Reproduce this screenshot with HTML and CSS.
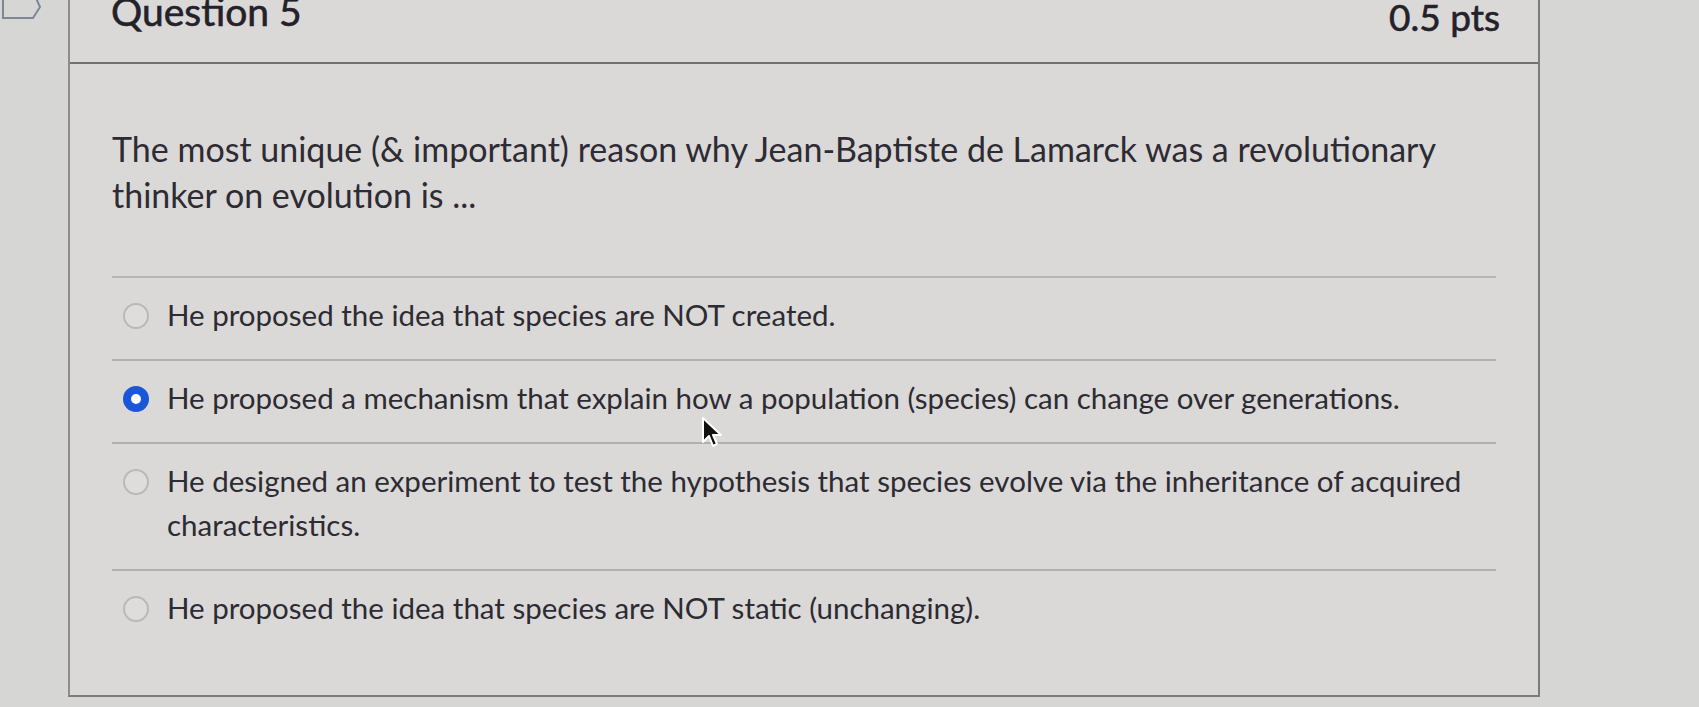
FILE: index.html
```html
<!DOCTYPE html>
<html lang="en">
<head>
<meta charset="utf-8">
<title>Question 5</title>
<link rel="stylesheet" href="styles.css">
</head>
<body>
<div class="page">
  <div class="gutter">
    <svg class="flag" width="44" height="22" viewBox="0 0 44 22"><path d="M3 -2 L3 18 L33 18 L40 7 L36 -2" fill="none" stroke="#7f8796" stroke-width="2"/></svg>
  </div>
  <section class="question">
    <header class="q-header">
      <h2 class="q-title">Question 5</h2>
      <span class="q-points">0.5 pts</span>
    </header>
    <div class="q-body">
      <p class="q-text">The most unique (&amp; important) reason why Jean-Baptiste de Lamarck was a revolutionary thinker on evolution is ...</p>
      <div class="answers">
        <label class="answer"><span class="radio"></span><span class="answer-text">He proposed the idea that species are NOT created.</span></label>
        <label class="answer"><span class="radio checked"></span><span class="answer-text">He proposed a mechanism that explain how a population (species) can change over generations.</span></label>
        <label class="answer"><span class="radio"></span><span class="answer-text">He designed an experiment to test the hypothesis that species evolve via the inheritance of acquired characteristics.</span></label>
        <label class="answer"><span class="radio"></span><span class="answer-text">He proposed the idea that species are NOT static (unchanging).</span></label>
      </div>
    </div>
  </section>
  <div class="right-gutter"></div>
</div>
<svg class="cursor" width="24" height="34" viewBox="0 0 24 34"><path d="M2 2 L2 26 L8 20 L12 30 L16 28 L12 19 L20 19 Z" fill="#111" stroke="#fff" stroke-width="2" stroke-linejoin="round"/></svg>
</body>
</html>
```

FILE: styles.css
```css
html, body {
  margin: 0;
  padding: 0;
  height: 100%;
  overflow: hidden;
}
body {
  background: #d6d6d4;
  font-family: Lato, "Open Sans", "Liberation Sans", sans-serif;
  color: #2d2b33;
  position: relative;
}
.page {
  display: flex;
  align-items: flex-start;
}
.gutter {
  width: 68px;
  flex: none;
}
.flag {
  display: block;
}
.question {
  width: 1472px;
  flex: none;
  background: #dad9d7;
  border-left: 2px solid #8c8c8c;
  border-right: 2px solid #7c7c7c;
  border-bottom: 2px solid #7c7c7c;
  box-sizing: border-box;
}
.q-header {
  height: 64px;
  box-sizing: border-box;
  border-bottom: 2px solid #707070;
  display: flex;
  justify-content: space-between;
  align-items: flex-end;
  padding: 0 38px 31px 41px;
}
.q-title, .q-points {
  margin: 0;
  font-size: 39px;
  line-height: 39px;
  font-weight: 400;
  color: #232129;
  -webkit-text-stroke: 0.6px #232129;
}
.q-points {
  font-size: 37px;
  margin-bottom: -5px;
}
.q-body {
  padding: 62px 42px 43px 42px;
}
.q-text {
  margin: 0 0 58px 0;
  font-size: 34px;
  line-height: 46px;
}
.answer {
  display: flex;
  align-items: flex-start;
  gap: 18px;
  border-top: 2px solid #b0b0ae;
  padding: 15px 20px 22px 11px;
}
.answers .answer:first-child {
  border-top-color: #b6b6b4;
}
.radio {
  flex: none;
  width: 26px;
  height: 26px;
  margin-top: 10px;
  border-radius: 50%;
  border: 2px solid #b9b9b7;
  background: #dedddb;
  box-sizing: border-box;
}
.radio.checked {
  border: 8px solid #1a57d8;
  background: #ffffff;
}
.answer-text {
  font-size: 29.5px;
  line-height: 44px;
}
.cursor {
  position: absolute;
  left: 701px;
  top: 416px;
}
```
